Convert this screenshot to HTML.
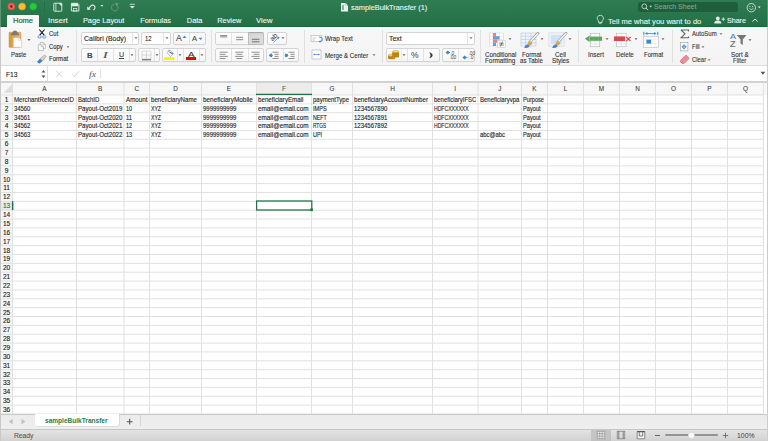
<!DOCTYPE html>
<html><head><meta charset="utf-8"><style>
html,body{margin:0;padding:0;width:768px;height:441px;overflow:hidden;background:#fff;position:relative;font-family:"Liberation Sans",sans-serif}
</style></head><body>
<div style="position:absolute;left:0px;top:0px;width:768px;height:27px;background:linear-gradient(#307d53,#2a774e 45%,#227046 96%,#1b663d 96%)"></div><svg style="position:absolute;left:0px;top:0px;" width="45" height="14" viewBox="0 0 45 14"><circle cx="11.3" cy="6.5" r="3.5" fill="#fc5f57" stroke="#de4a42" stroke-width="0.5"/><circle cx="11.3" cy="6.5" r="1.15" fill="#6a0b07"/><circle cx="22.1" cy="6.5" r="3.5" fill="#fdbb2e" stroke="#dea034" stroke-width="0.5"/><circle cx="33.2" cy="6.5" r="3.5" fill="#28c840" stroke="#1aab29" stroke-width="0.5"/></svg><div style="position:absolute;left:7px;top:15px;width:32px;height:12px;background:#f8f8f8;border-radius:1px 1px 0 0"></div><div style="position:absolute;left:638px;top:1.8px;width:99.8px;height:10px;background:#1f5e3b;border-radius:2.5px"></div><div style="position:absolute;left:0px;top:27px;width:768px;height:39px;background:linear-gradient(#f7f7f7,#f4f4f4);border-bottom:1px solid #dcdcdc;box-sizing:border-box"></div><div style="position:absolute;left:76.4px;top:29.6px;width:1px;height:33.7px;background:#e0e0e0"></div><div style="position:absolute;left:210.7px;top:29.6px;width:1px;height:33.7px;background:#e0e0e0"></div><div style="position:absolute;left:304px;top:29.6px;width:1px;height:33.7px;background:#e0e0e0"></div><div style="position:absolute;left:381.8px;top:29.6px;width:1px;height:33.7px;background:#e0e0e0"></div><div style="position:absolute;left:480px;top:29.6px;width:1px;height:33.7px;background:#e0e0e0"></div><div style="position:absolute;left:578px;top:29.6px;width:1px;height:33.7px;background:#e0e0e0"></div><div style="position:absolute;left:671.5px;top:29.6px;width:1px;height:33.7px;background:#e0e0e0"></div><div style="position:absolute;left:0px;top:66px;width:768px;height:15px;background:#fff"></div><div style="position:absolute;left:0px;top:81px;width:768px;height:2px;background:#d2d2d2"></div><div style="position:absolute;left:46.5px;top:66px;width:1px;height:15px;background:#dedede"></div><div style="position:absolute;left:100px;top:69px;width:0.8px;height:9px;background:#e2e2e2"></div><svg style="position:absolute;left:0px;top:83px;" width="768" height="331" viewBox="0 0 768 331"><rect x="0" y="0" width="768" height="12.0" fill="#f7f7f7"/><rect x="0" y="12.0" width="13" height="319.0" fill="#f7f7f7"/><rect x="256" y="0" width="56" height="12.0" fill="#ececec"/><rect x="0" y="118.32" width="13" height="8.86" fill="#e9e9e9"/><rect x="0" y="11.50" width="764" height="1" fill="#e1e1e1"/><rect x="0" y="20.36" width="764" height="1" fill="#e1e1e1"/><rect x="0" y="29.22" width="764" height="1" fill="#e1e1e1"/><rect x="0" y="38.08" width="764" height="1" fill="#e1e1e1"/><rect x="0" y="46.94" width="764" height="1" fill="#e1e1e1"/><rect x="0" y="55.80" width="764" height="1" fill="#e1e1e1"/><rect x="0" y="64.66" width="764" height="1" fill="#e1e1e1"/><rect x="0" y="73.52" width="764" height="1" fill="#e1e1e1"/><rect x="0" y="82.38" width="764" height="1" fill="#e1e1e1"/><rect x="0" y="91.24" width="764" height="1" fill="#e1e1e1"/><rect x="0" y="100.10" width="764" height="1" fill="#e1e1e1"/><rect x="0" y="108.96" width="764" height="1" fill="#e1e1e1"/><rect x="0" y="117.82" width="764" height="1" fill="#e1e1e1"/><rect x="0" y="126.68" width="764" height="1" fill="#e1e1e1"/><rect x="0" y="135.54" width="764" height="1" fill="#e1e1e1"/><rect x="0" y="144.40" width="764" height="1" fill="#e1e1e1"/><rect x="0" y="153.26" width="764" height="1" fill="#e1e1e1"/><rect x="0" y="162.12" width="764" height="1" fill="#e1e1e1"/><rect x="0" y="170.98" width="764" height="1" fill="#e1e1e1"/><rect x="0" y="179.84" width="764" height="1" fill="#e1e1e1"/><rect x="0" y="188.70" width="764" height="1" fill="#e1e1e1"/><rect x="0" y="197.56" width="764" height="1" fill="#e1e1e1"/><rect x="0" y="206.42" width="764" height="1" fill="#e1e1e1"/><rect x="0" y="215.28" width="764" height="1" fill="#e1e1e1"/><rect x="0" y="224.14" width="764" height="1" fill="#e1e1e1"/><rect x="0" y="233.00" width="764" height="1" fill="#e1e1e1"/><rect x="0" y="241.86" width="764" height="1" fill="#e1e1e1"/><rect x="0" y="250.72" width="764" height="1" fill="#e1e1e1"/><rect x="0" y="259.58" width="764" height="1" fill="#e1e1e1"/><rect x="0" y="268.44" width="764" height="1" fill="#e1e1e1"/><rect x="0" y="277.30" width="764" height="1" fill="#e1e1e1"/><rect x="0" y="286.16" width="764" height="1" fill="#e1e1e1"/><rect x="0" y="295.02" width="764" height="1" fill="#e1e1e1"/><rect x="0" y="303.88" width="764" height="1" fill="#e1e1e1"/><rect x="0" y="312.74" width="764" height="1" fill="#e1e1e1"/><rect x="0" y="321.60" width="764" height="1" fill="#e1e1e1"/><rect x="0" y="330.46" width="764" height="1" fill="#e1e1e1"/><rect x="12" y="0" width="1" height="331" fill="#e1e1e1"/><rect x="76" y="0" width="1" height="331" fill="#e1e1e1"/><rect x="123.5" y="0" width="1" height="331" fill="#e1e1e1"/><rect x="149" y="0" width="1" height="331" fill="#e1e1e1"/><rect x="201" y="0" width="1" height="331" fill="#e1e1e1"/><rect x="256" y="0" width="1" height="331" fill="#e1e1e1"/><rect x="311" y="0" width="1" height="331" fill="#e1e1e1"/><rect x="352" y="0" width="1" height="331" fill="#e1e1e1"/><rect x="432" y="0" width="1" height="331" fill="#e1e1e1"/><rect x="477.5" y="0" width="1" height="331" fill="#e1e1e1"/><rect x="521" y="0" width="1" height="331" fill="#e1e1e1"/><rect x="547" y="0" width="1" height="331" fill="#e1e1e1"/><rect x="583" y="0" width="1" height="331" fill="#e1e1e1"/><rect x="619" y="0" width="1" height="331" fill="#e1e1e1"/><rect x="655" y="0" width="1" height="331" fill="#e1e1e1"/><rect x="691" y="0" width="1" height="331" fill="#e1e1e1"/><rect x="727" y="0" width="1" height="331" fill="#e1e1e1"/><rect x="763" y="0" width="1" height="331" fill="#e1e1e1"/><rect x="256.6" y="118.0" width="55.2" height="9.0" fill="none" stroke="#217346" stroke-width="1.25"/><rect x="310.2" y="125.5" width="2.7" height="2.6" fill="#217346"/><rect x="256" y="10.75" width="56" height="1.3" fill="#217346"/><rect x="11.9" y="118.2" width="1.5" height="8.9" fill="#217346"/><path d="M3.6 9.7 L12.3 1 L12.3 9.7 Z" fill="#dddddd"/></svg><div style="position:absolute;left:0px;top:414px;width:768px;height:15px;background:linear-gradient(#ebebeb,#efefef);border-top:1px solid #c9c9c9;box-sizing:border-box"></div><div style="position:absolute;left:34.8px;top:413.5px;width:84px;height:12.9px;background:#fff;border-radius:0 0 2px 2px;box-shadow:0.5px 0.5px 0.5px rgba(0,0,0,.15)"></div><div style="position:absolute;left:140px;top:415px;width:0.8px;height:11px;background:#d5d5d5"></div><div style="position:absolute;left:0px;top:428.6px;width:768px;height:12.4px;background:linear-gradient(#e3e3e3,#d9d9d9 60%,#d1d1d1);border-top:1px solid #c6c6c6;box-sizing:border-box"></div><div style="position:absolute;left:591px;top:429.5px;width:20.3px;height:11.5px;background:linear-gradient(#c6c6c6,#c1c1c1)"></div><svg style="position:absolute;left:8px;top:29px;" width="22" height="20" viewBox="0 0 22 20"><defs><linearGradient id="cb" x1="0" x2="1"><stop offset="0" stop-color="#d99a3e"/><stop offset="1" stop-color="#eab766"/></linearGradient></defs><rect x="1" y="3.2" width="12" height="15.2" rx="0.8" fill="url(#cb)" stroke="#c48a3a" stroke-width="0.4"/><path d="M3 6.2 Q3 3.6 4.6 3.2 Q5.2 1.6 7 1.6 Q8.8 1.6 9.4 3.2 Q11 3.6 11 6.2 Z" fill="#7b7b7b"/><path d="M5.4 8.7 H10.8 L13.6 11.5 V18.3 H5.4 Z" fill="#fff" stroke="#c4c4c4" stroke-width="0.5"/><path d="M10.8 8.7 V11.5 H13.6" fill="none" stroke="#c4c4c4" stroke-width="0.5"/></svg><svg style="position:absolute;left:25.5px;top:36.5px;" width="6" height="6" viewBox="0 0 6 6"><path d="M1.375 2.10625 L4.625 2.10625 L3 4.05625 Z" fill="#666"/></svg><svg style="position:absolute;left:36px;top:28px;" width="12" height="12" viewBox="0 0 12 12"><path d="M3.3 1.5 L8.2 7.2 M8.6 1.5 L3.7 7.2" stroke="#111" stroke-width="1.1"/><ellipse cx="3.6" cy="8.9" rx="1.7" ry="1.25" fill="none" stroke="#3d8be0" stroke-width="0.8"/><ellipse cx="8.3" cy="8.9" rx="1.7" ry="1.25" fill="none" stroke="#3d8be0" stroke-width="0.8"/></svg><svg style="position:absolute;left:37px;top:41px;" width="10" height="11" viewBox="0 0 10 11"><path d="M3.2 1.4 H6.2 L8.3 3.5 V7.6 H3.2 Z" fill="#fbfbfb" stroke="#9a9a9a" stroke-width="0.55"/><path d="M6.2 1.4 V3.5 H8.3" fill="none" stroke="#9a9a9a" stroke-width="0.5"/><path d="M1.3 3.6 H4.3 L6.4 5.7 V9.6 H1.3 Z" fill="#fbfbfb" stroke="#9a9a9a" stroke-width="0.55"/><path d="M4.3 3.6 V5.7 H6.4" fill="none" stroke="#9a9a9a" stroke-width="0.5"/></svg><svg style="position:absolute;left:65px;top:43.6px;" width="6" height="6" viewBox="0 0 6 6"><path d="M1.625 2.24375 L4.375 2.24375 L3 3.89375 Z" fill="#777"/></svg><svg style="position:absolute;left:36px;top:54px;" width="11" height="10" viewBox="0 0 11 10"><path d="M1.2 7.6 L4.2 4.6 L6.6 7 L3.6 9.6 Q1.8 9.4 1.2 7.6 Z" fill="#3b7fd4"/><path d="M4.2 4.6 L8.6 0.8 L10.2 2.4 L6.6 7 Z" fill="#cfc6b6" stroke="#8f8472" stroke-width="0.4"/><path d="M5 5.4 L9 1.6" stroke="#fff" stroke-width="0.5"/></svg><div style="position:absolute;left:81px;top:32px;width:58px;height:13px;background:#fff;border:1px solid #d4d4d4;border-radius:2px;box-sizing:border-box"></div><div style="position:absolute;left:132.3px;top:32.6px;width:0.8px;height:10.6px;background:#e4e4e4"></div><svg style="position:absolute;left:132.6px;top:35.2px;" width="6" height="6" viewBox="0 0 6 6"><path d="M1.5 2.175 L4.5 2.175 L3 3.975 Z" fill="#666"/></svg><div style="position:absolute;left:141px;top:32px;width:30px;height:13px;background:#fff;border:1px solid #d4d4d4;border-radius:2px;box-sizing:border-box"></div><div style="position:absolute;left:163px;top:32.6px;width:0.8px;height:10.6px;background:#e4e4e4"></div><svg style="position:absolute;left:163.7px;top:35.2px;" width="6" height="6" viewBox="0 0 6 6"><path d="M1.5 2.175 L4.5 2.175 L3 3.975 Z" fill="#666"/></svg><div style="position:absolute;left:173px;top:32px;width:33px;height:13px;background:linear-gradient(#fefefe,#f5f5f5);border:1px solid #d4d4d4;border-radius:2px;box-sizing:border-box;box-shadow:0 0.5px 0.5px rgba(0,0,0,.04)"></div><div style="position:absolute;left:189.3px;top:33px;width:0.8px;height:11px;background:#e2e2e2"></div><svg style="position:absolute;left:182px;top:35px;" width="5" height="4" viewBox="0 0 5 4"><path d="M0.5 3 L2.5 0.8 L4.5 3 Z" fill="#3a86d8"/></svg><svg style="position:absolute;left:197.8px;top:36.5px;" width="5" height="4" viewBox="0 0 5 4"><path d="M0.5 0.8 L2.5 3 L4.5 0.8 Z" fill="#3a86d8"/></svg><div style="position:absolute;left:81px;top:48px;width:55px;height:14px;background:linear-gradient(#fefefe,#f5f5f5);border:1px solid #d4d4d4;border-radius:2px;box-sizing:border-box;box-shadow:0 0.5px 0.5px rgba(0,0,0,.04)"></div><div style="position:absolute;left:97.3px;top:49px;width:0.8px;height:12px;background:#e2e2e2"></div><div style="position:absolute;left:113.4px;top:49px;width:0.8px;height:12px;background:#e2e2e2"></div><div style="position:absolute;left:129px;top:49px;width:0.8px;height:12px;background:#e2e2e2"></div><div style="position:absolute;left:118.8px;top:58.2px;width:5.3px;height:0.8px;background:#444"></div><svg style="position:absolute;left:129.4px;top:52px;" width="6" height="6" viewBox="0 0 6 6"><path d="M1.5 2.175 L4.5 2.175 L3 3.975 Z" fill="#666"/></svg><div style="position:absolute;left:138px;top:48px;width:22px;height:14px;background:linear-gradient(#fefefe,#f5f5f5);border:1px solid #d4d4d4;border-radius:2px;box-sizing:border-box;box-shadow:0 0.5px 0.5px rgba(0,0,0,.04)"></div><div style="position:absolute;left:153.5px;top:49px;width:0.8px;height:12px;background:#e2e2e2"></div><svg style="position:absolute;left:141px;top:49.5px;" width="11" height="11" viewBox="0 0 11 11"><path d="M1 1 H10 V9 H1 Z M5.5 1 V9 M1 5 H10" fill="none" stroke="#c4c4c4" stroke-width="0.6"/><path d="M1 9.8 H10" stroke="#444" stroke-width="0.9"/></svg><svg style="position:absolute;left:153.5px;top:52px;" width="6" height="6" viewBox="0 0 6 6"><path d="M1.5 2.175 L4.5 2.175 L3 3.975 Z" fill="#666"/></svg><div style="position:absolute;left:162px;top:48px;width:44px;height:14px;background:linear-gradient(#fefefe,#f5f5f5);border:1px solid #d4d4d4;border-radius:2px;box-sizing:border-box;box-shadow:0 0.5px 0.5px rgba(0,0,0,.04)"></div><div style="position:absolute;left:176.5px;top:49px;width:0.8px;height:12px;background:#e2e2e2"></div><div style="position:absolute;left:183.2px;top:49px;width:0.8px;height:12px;background:#e2e2e2"></div><div style="position:absolute;left:199.1px;top:49px;width:0.8px;height:12px;background:#e2e2e2"></div><svg style="position:absolute;left:164px;top:49px;" width="11" height="11" viewBox="0 0 11 11"><path d="M3 3.5 L6 1 L9.5 4.5 L6.5 7.5 Z" fill="#fff" stroke="#888" stroke-width="0.6"/><path d="M5.5 3 L8.8 5" stroke="#3a86d8" stroke-width="1.3"/><path d="M5 0.5 V3" stroke="#666" stroke-width="0.5"/><rect x="0" y="8.2" width="10.5" height="2.6" fill="#f4f400"/></svg><svg style="position:absolute;left:177px;top:52px;" width="6" height="6" viewBox="0 0 6 6"><path d="M1.5 2.175 L4.5 2.175 L3 3.975 Z" fill="#666"/></svg><div style="position:absolute;left:186px;top:57.2px;width:10.4px;height:2.5px;background:#ee0000"></div><svg style="position:absolute;left:199.2px;top:52px;" width="6" height="6" viewBox="0 0 6 6"><path d="M1.5 2.175 L4.5 2.175 L3 3.975 Z" fill="#666"/></svg><div style="position:absolute;left:215px;top:32px;width:49px;height:13px;background:linear-gradient(#fefefe,#f5f5f5);border:1px solid #d4d4d4;border-radius:2px;box-sizing:border-box;box-shadow:0 0.5px 0.5px rgba(0,0,0,.04)"></div><div style="position:absolute;left:248px;top:32px;width:16px;height:13px;background:linear-gradient(#cfcfcf,#dadada 20%,#dcdcdc);border:1px solid #bdbdbd;border-top-color:#a8a8a8;box-sizing:border-box;border-radius:0 2px 2px 0"></div><div style="position:absolute;left:231.3px;top:33px;width:0.8px;height:11px;background:#e2e2e2"></div><svg style="position:absolute;left:215px;top:31px;" width="49" height="14" viewBox="0 0 49 14"><path d="M5.2 4.6 H12.2 M5.2 5.9 H12.2" stroke="#777" stroke-width="0.9"/><path d="M21.2 6.3 H28.1 M21.2 8.7 H28.1" stroke="#777" stroke-width="0.9"/><path d="M36.9 8.3 H44.5 M36.9 10.8 H44.5" stroke="#666" stroke-width="0.9"/></svg><div style="position:absolute;left:267px;top:32px;width:20px;height:13px;background:linear-gradient(#fefefe,#f5f5f5);border:1px solid #d4d4d4;border-radius:2px;box-sizing:border-box;box-shadow:0 0.5px 0.5px rgba(0,0,0,.04)"></div><svg style="position:absolute;left:267px;top:32px;" width="15" height="13" viewBox="0 0 15 13"><g transform="rotate(-45 6.5 5)"><text x="6.5" y="7.4" text-anchor="middle" font-family="Liberation Sans" font-size="7" fill="#333" style="-webkit-text-stroke:0.15px #333">ab</text></g><path d="M6.3 10.6 L11.3 5.8" stroke="#3a86d8" stroke-width="0.7"/><circle cx="11.4" cy="5.7" r="1" fill="#3a86d8"/></svg><svg style="position:absolute;left:280px;top:35px;" width="6" height="6" viewBox="0 0 6 6"><path d="M1.5 2.175 L4.5 2.175 L3 3.975 Z" fill="#666"/></svg><div style="position:absolute;left:215px;top:48px;width:49px;height:14px;background:linear-gradient(#fefefe,#f5f5f5);border:1px solid #d4d4d4;border-radius:2px;box-sizing:border-box;box-shadow:0 0.5px 0.5px rgba(0,0,0,.04)"></div><div style="position:absolute;left:231.3px;top:49px;width:0.8px;height:12px;background:#e2e2e2"></div><div style="position:absolute;left:247.8px;top:49px;width:0.8px;height:12px;background:#e2e2e2"></div><svg style="position:absolute;left:215px;top:48px;" width="49" height="14" viewBox="0 0 49 14"><path d="M4.6 4.2 H12.8 M4.6 6.3 H10.5 M4.6 8.4 H12.8 M4.6 10.5 H10.5" stroke="#777" stroke-width="0.8"/><path d="M20.2 4.2 H28.4 M21.3 6.3 H27.3 M20.2 8.4 H28.4 M21.3 10.5 H27.3" stroke="#777" stroke-width="0.8"/><path d="M36.4 4.2 H44.6 M38.6 6.3 H44.6 M36.4 8.4 H44.6 M38.6 10.5 H44.6" stroke="#777" stroke-width="0.8"/></svg><div style="position:absolute;left:266px;top:48px;width:33px;height:14px;background:linear-gradient(#fefefe,#f5f5f5);border:1px solid #d4d4d4;border-radius:2px;box-sizing:border-box;box-shadow:0 0.5px 0.5px rgba(0,0,0,.04)"></div><div style="position:absolute;left:282.6px;top:49px;width:0.8px;height:12px;background:#e2e2e2"></div><svg style="position:absolute;left:266px;top:48px;" width="33" height="14" viewBox="0 0 33 14"><path d="M6.5 4.2 H12.6 M8.5 6.3 H12.6 M8.5 8.4 H12.6 M6.5 10.5 H12.6" stroke="#777" stroke-width="0.8"/><path d="M3 7.3 L6 5.2 V9.4 Z" fill="#3a86d8"/><circle cx="5" cy="7.3" r="1.6" fill="#3a86d8"/><path d="M22.5 4.2 H28.6 M24.5 6.3 H28.6 M24.5 8.4 H28.6 M22.5 10.5 H28.6" stroke="#777" stroke-width="0.8"/><path d="M19 5.2 L22 7.3 L19 9.4 Z" fill="#3a86d8"/><circle cx="20.5" cy="7.3" r="1.6" fill="#3a86d8"/></svg><svg style="position:absolute;left:310px;top:34px;" width="14" height="9" viewBox="0 0 14 9"><rect x="1" y="1.5" width="10.5" height="6" fill="#fff" stroke="#aaa" stroke-width="0.6"/><path d="M2.5 4 H6 M2.5 6 H5" stroke="#aaa" stroke-width="0.6"/><path d="M9 3 Q12.5 3 12.5 5.5 Q12.5 7.6 9.8 7.6" fill="none" stroke="#3a86d8" stroke-width="0.9"/><path d="M10.4 6.3 L8.6 7.6 L10.4 8.9 Z" fill="#3a86d8"/></svg><svg style="position:absolute;left:311px;top:49px;" width="11" height="11" viewBox="0 0 11 11"><rect x="1" y="1" width="9" height="9" fill="#fff" stroke="#aaa" stroke-width="0.6"/><path d="M2.5 5.5 H8.5" stroke="#3a86d8" stroke-width="0.7"/><path d="M2.2 5.5 L3.6 4.4 V6.6 Z M8.8 5.5 L7.4 4.4 V6.6 Z" fill="#3a86d8"/></svg><svg style="position:absolute;left:370.5px;top:52px;" width="6" height="6" viewBox="0 0 6 6"><path d="M1.5 2.175 L4.5 2.175 L3 3.975 Z" fill="#777"/></svg><div style="position:absolute;left:386px;top:32px;width:89px;height:13px;background:#fff;border:1px solid #d4d4d4;border-radius:2px;box-sizing:border-box"></div><div style="position:absolute;left:466.8px;top:32.5px;width:0.8px;height:11px;background:#e4e4e4"></div><svg style="position:absolute;left:467.6px;top:35.3px;" width="6" height="6" viewBox="0 0 6 6"><path d="M1.5 2.175 L4.5 2.175 L3 3.975 Z" fill="#666"/></svg><div style="position:absolute;left:386px;top:48px;width:54px;height:14px;background:linear-gradient(#fefefe,#f5f5f5);border:1px solid #d4d4d4;border-radius:2px;box-sizing:border-box;box-shadow:0 0.5px 0.5px rgba(0,0,0,.04)"></div><div style="position:absolute;left:407.4px;top:49px;width:0.8px;height:12px;background:#e2e2e2"></div><div style="position:absolute;left:423.4px;top:49px;width:0.8px;height:12px;background:#e2e2e2"></div><div style="position:absolute;left:400.9px;top:49.5px;width:0.6px;height:11px;background:#ececec"></div><svg style="position:absolute;left:387px;top:49px;" width="14" height="12" viewBox="0 0 14 12"><rect x="1" y="6.2" width="7.2" height="4" rx="1.2" fill="#c8961c"/><path d="M1.2 7.6 H8 M1.2 9 H8" stroke="#8f6608" stroke-width="0.5"/><ellipse cx="4.6" cy="6.2" rx="3.6" ry="1.2" fill="#f5d469" stroke="#a87a10" stroke-width="0.3"/><rect x="5.2" y="2.6" width="6.8" height="6" rx="1.2" fill="#c8961c"/><path d="M5.4 4.2 H11.8 M5.4 5.7 H11.8 M5.4 7.2 H11.8" stroke="#8f6608" stroke-width="0.5"/><ellipse cx="8.6" cy="2.6" rx="3.4" ry="1.2" fill="#f5d469" stroke="#a87a10" stroke-width="0.3"/></svg><svg style="position:absolute;left:401px;top:52px;" width="6" height="6" viewBox="0 0 6 6"><path d="M1.5 2.175 L4.5 2.175 L3 3.975 Z" fill="#666"/></svg><svg style="position:absolute;left:427px;top:50px;" width="8" height="10" viewBox="0 0 8 10"><path d="M2 2.2 Q5.6 3.2 5.6 5.2 Q5.6 7.4 2.2 8 Q3.6 6.6 3.6 5.2 Q3.6 3.8 2 2.2 Z" fill="#333"/></svg><div style="position:absolute;left:442px;top:48px;width:33px;height:14px;background:linear-gradient(#fefefe,#f5f5f5);border:1px solid #d4d4d4;border-radius:2px;box-sizing:border-box;box-shadow:0 0.5px 0.5px rgba(0,0,0,.04)"></div><div style="position:absolute;left:458.4px;top:49px;width:0.8px;height:12px;background:#e2e2e2"></div><svg style="position:absolute;left:443px;top:49px;" width="34" height="12" viewBox="0 0 34 12"><path d="M2.6 3.4 L4.8 1.4 L7 3.4 L4.8 5.4 Z" fill="#3a86d8"/><path d="M4.8 3.4 H7" stroke="#3a86d8" stroke-width="0.9"/><text x="7.2" y="5.8" font-family="Liberation Sans" font-size="4.9" fill="#444">.0</text><text x="6.4" y="10.4" font-family="Liberation Sans" font-size="4.9" fill="#444">.00</text><text x="25.4" y="5.8" font-family="Liberation Sans" font-size="4.9" fill="#444">.00</text><text x="26.4" y="10.4" font-family="Liberation Sans" font-size="4.9" fill="#444">.0</text><path d="M19.4 8.4 L21.6 6.4 L23.8 8.4 L21.6 10.4 Z" fill="#3a86d8"/><path d="M21.6 8.4 H25.4" stroke="#3a86d8" stroke-width="0.7" stroke-dasharray="0.8 0.6"/></svg><svg style="position:absolute;left:488px;top:32px;" width="20" height="17" viewBox="0 0 20 17"><rect x="1.5" y="1" width="14" height="13" fill="#fff" stroke="#ccc" stroke-width="0.5"/><path d="M1.5 4.2 H15.5 M1.5 7.5 H15.5 M1.5 10.8 H15.5 M5 1 V14 M11.5 1 V14" stroke="#d5d5d5" stroke-width="0.5"/><rect x="5" y="1" width="3" height="3.2" fill="#f08080"/><rect x="5" y="4.2" width="6.5" height="3.3" fill="#5aa0e8"/><rect x="5" y="7.5" width="4" height="3.3" fill="#f08080"/><rect x="5" y="10.8" width="3" height="3.2" fill="#5aa0e8"/><rect x="9.5" y="8.5" width="8" height="7" fill="#fff" stroke="#bbb" stroke-width="0.5"/><path d="M11.3 11.2 H15.7 M11.3 13 H15.7 M12.6 14.6 L14.4 9.6" stroke="#333" stroke-width="0.6"/></svg><svg style="position:absolute;left:507px;top:36px;" width="6" height="6" viewBox="0 0 6 6"><path d="M1.5 2.175 L4.5 2.175 L3 3.975 Z" fill="#666"/></svg><svg style="position:absolute;left:520px;top:32px;" width="20" height="17" viewBox="0 0 20 17"><rect x="1" y="1" width="15" height="13" fill="#eef5fc" stroke="#bbb" stroke-width="0.5"/><path d="M1 4.2 H16 M1 7.5 H16 M1 10.8 H16 M5.5 1 V14 M11 1 V14" stroke="#9cc3ea" stroke-width="0.5"/><path d="M18 1.2 L10 10" stroke="#8a8a8a" stroke-width="2.6" stroke-linecap="round"/><path d="M18 1.2 L10 10" stroke="#fafafa" stroke-width="1.5" stroke-linecap="round"/><path d="M9.2 8.2 L12.4 11.2 Q10.4 14.6 6.4 14.2 Z" fill="#e5a04a"/><path d="M4.2 16 Q5.2 12.4 8.2 12.6 L9.6 14.4 Q7.6 16.4 4.2 16 Z" fill="#3b86e0"/></svg><svg style="position:absolute;left:539px;top:36px;" width="6" height="6" viewBox="0 0 6 6"><path d="M1.5 2.175 L4.5 2.175 L3 3.975 Z" fill="#666"/></svg><svg style="position:absolute;left:548px;top:32px;" width="20" height="17" viewBox="0 0 20 17"><rect x="1" y="1" width="15" height="13" fill="#fff" stroke="#bbb" stroke-width="0.5"/><rect x="2.5" y="2.5" width="12" height="10" fill="#cfe3f7"/><path d="M18 1.2 L10 10" stroke="#8a8a8a" stroke-width="2.6" stroke-linecap="round"/><path d="M18 1.2 L10 10" stroke="#fafafa" stroke-width="1.5" stroke-linecap="round"/><path d="M9.2 8.2 L12.4 11.2 Q10.4 14.6 6.4 14.2 Z" fill="#e5a04a"/><path d="M4.2 16 Q5.2 12.4 8.2 12.6 L9.6 14.4 Q7.6 16.4 4.2 16 Z" fill="#3b86e0"/></svg><svg style="position:absolute;left:567px;top:36px;" width="6" height="6" viewBox="0 0 6 6"><path d="M1.5 2.175 L4.5 2.175 L3 3.975 Z" fill="#666"/></svg><svg style="position:absolute;left:583px;top:32px;" width="20" height="16" viewBox="0 0 20 16"><rect x="7.2" y="1.2" width="9.6" height="13.6" fill="#fff" stroke="#a0a0a0" stroke-width="0.5"/><path d="M7.2 9.4 H16.8 M7.2 12 H16.8 M12 1.2 V14.8" stroke="#d0d0d0" stroke-width="0.5"/><rect x="7" y="4.6" width="12" height="4.2" fill="#5aa85a"/><path d="M11 4.6 V8.8 M15 4.6 V8.8" stroke="#8cc68c" stroke-width="0.4"/><path d="M1.8 6.7 L6.6 3.4 V10 Z" fill="#5aa85a"/></svg><svg style="position:absolute;left:603.7px;top:36px;" width="6" height="6" viewBox="0 0 6 6"><path d="M1.5 2.175 L4.5 2.175 L3 3.975 Z" fill="#666"/></svg><svg style="position:absolute;left:612px;top:32px;" width="22" height="16" viewBox="0 0 22 16"><rect x="4.5" y="1.2" width="9.6" height="13.6" fill="#fff" stroke="#aaa" stroke-width="0.5"/><path d="M4.5 5.2 H14.1 M4.5 9 H14.1 M4.5 12 H14.1 M9.3 1.2 V14.8" stroke="#ccc" stroke-width="0.5"/><rect x="2" y="4.4" width="11" height="4.6" fill="#d64b4b"/><path d="M14.3 5 L18.5 9 M18.5 5 L14.3 9" stroke="#d64b4b" stroke-width="1.1"/></svg><svg style="position:absolute;left:632.7px;top:36px;" width="6" height="6" viewBox="0 0 6 6"><path d="M1.5 2.175 L4.5 2.175 L3 3.975 Z" fill="#666"/></svg><svg style="position:absolute;left:642px;top:31px;" width="18" height="18" viewBox="0 0 18 18"><path d="M1.8 0.8 V4.2 M15.8 0.8 V4.2" stroke="#3a86d8" stroke-width="1"/><path d="M3.5 2.5 H14" stroke="#3a86d8" stroke-width="0.8"/><path d="M3 2.5 L5.4 1 V4 Z M14.6 2.5 L12.2 1 V4 Z" fill="#3a86d8"/><rect x="1.5" y="5.2" width="15" height="11.3" fill="#fff" stroke="#a8a8a8" stroke-width="0.5"/><path d="M1.5 8.7 H16.5 M1.5 12.6 H16.5 M9.3 5.2 V16.5 M12.9 5.2 V16.5" stroke="#dedede" stroke-width="0.5"/><rect x="4.4" y="8.7" width="4.6" height="3.9" fill="#3a86d8"/></svg><svg style="position:absolute;left:660px;top:36px;" width="6" height="6" viewBox="0 0 6 6"><path d="M1.5 2.175 L4.5 2.175 L3 3.975 Z" fill="#666"/></svg><svg style="position:absolute;left:680px;top:29px;" width="10" height="10" viewBox="0 0 10 10"><path d="M1 1 H8.5 V2.4 M1 1 L5 4.8 L1 8.8 H8.5 V7.4" fill="none" stroke="#666" stroke-width="1.1"/></svg><svg style="position:absolute;left:718px;top:31px;" width="6" height="6" viewBox="0 0 6 6"><path d="M1.5 2.175 L4.5 2.175 L3 3.975 Z" fill="#777"/></svg><svg style="position:absolute;left:679px;top:41px;" width="10" height="11" viewBox="0 0 10 11"><rect x="1.3" y="1.3" width="7.6" height="8.6" fill="#fff" stroke="#9a9a9a" stroke-width="0.6"/><path d="M5.1 3.2 L7.6 5.8 L5.1 8.4 L2.6 5.8 Z" fill="#3a86d8"/><path d="M5.1 4.4 V6.6 M4.2 5.8 L5.1 6.8 L6 5.8" fill="none" stroke="#fff" stroke-width="0.5"/></svg><svg style="position:absolute;left:699.5px;top:43.8px;" width="6" height="6" viewBox="0 0 6 6"><path d="M1.5 2.175 L4.5 2.175 L3 3.975 Z" fill="#777"/></svg><svg style="position:absolute;left:679px;top:54px;" width="11" height="10" viewBox="0 0 11 10"><path d="M1.6 6.2 L6.2 1.6 Q7 0.9 7.8 1.6 L9.6 3.4 Q10.3 4.2 9.6 5 L5 9.6 Q4.2 10.3 3.4 9.6 L1.6 7.8 Q0.9 7 1.6 6.2 Z" fill="#ea8c98" stroke="#c9636f" stroke-width="0.5"/><path d="M1.6 7.8 L3.4 9.6" stroke="#b94d5a" stroke-width="0.8"/></svg><svg style="position:absolute;left:706.4px;top:56.6px;" width="6" height="6" viewBox="0 0 6 6"><path d="M1.5 2.175 L4.5 2.175 L3 3.975 Z" fill="#777"/></svg><svg style="position:absolute;left:736px;top:34px;" width="12" height="12" viewBox="0 0 12 12"><path d="M0.8 1 H10.5 L6.8 5.5 V11 L4.5 9.6 V5.5 Z" fill="#777"/></svg><svg style="position:absolute;left:746.8px;top:37px;" width="6" height="6" viewBox="0 0 6 6"><path d="M1.5 2.175 L4.5 2.175 L3 3.975 Z" fill="#666"/></svg><svg style="position:absolute;left:52px;top:2px;" width="11" height="10" viewBox="0 0 11 10"><rect x="1.8" y="1.2" width="8" height="8" rx="0.5" fill="none" stroke="#e3eee7" stroke-width="0.9"/><path d="M3.9 1.2 V9.2" stroke="#e3eee7" stroke-width="0.8"/><path d="M6.6 1.2 H9.8 V4.4 Z" fill="#e3eee7"/></svg><svg style="position:absolute;left:70px;top:2px;" width="10" height="10" viewBox="0 0 10 10"><path d="M1.4 1.3 H7.6 L8.9 2.6 V9 H1.4 Z" fill="none" stroke="#e3eee7" stroke-width="0.9"/><rect x="1.4" y="1.3" width="6.6" height="3" fill="#e3eee7"/><rect x="3.4" y="6.6" width="3.4" height="2.4" fill="none" stroke="#e3eee7" stroke-width="0.7"/></svg><svg style="position:absolute;left:86px;top:2px;" width="12" height="9" viewBox="0 0 12 9"><path d="M2.6 6.6 L4.6 4.2 Q6.4 2.4 8.2 3.6 Q9.8 5 8.4 7.2 L7.4 8.2" fill="none" stroke="#e3eee7" stroke-width="1.05"/><path d="M1.2 4.4 L1.3 8 L4.8 7.6 Z" fill="#e3eee7"/></svg><div style="position:absolute;left:44px;top:2px;width:0.8px;height:10px;background:#246f48"></div><svg style="position:absolute;left:100px;top:4px;" width="4" height="4" viewBox="0 0 4 4"><path d="M0.4 1 H3.4 L1.9 2.8 Z" fill="#e3eee7"/></svg><svg style="position:absolute;left:110px;top:2px;" width="10" height="10" viewBox="0 0 10 10"><path d="M4.2 2.2 A3.4 3.4 0 1 0 7.6 3.6" fill="none" stroke="#6a9c7e" stroke-width="0.9"/><path d="M5.2 0.4 L8.6 1.6 L6.4 4.4 Z" fill="#6a9c7e"/></svg><svg style="position:absolute;left:129px;top:3px;" width="7" height="7" viewBox="0 0 7 7"><path d="M0.8 1.3 H5.8" stroke="#e3eee7" stroke-width="0.8"/><path d="M0.8 3 H5.8 L3.3 5.6 Z" fill="#e3eee7"/></svg><svg style="position:absolute;left:340px;top:2px;" width="9" height="10" viewBox="0 0 9 10"><path d="M1 1 H5.6 L8 3.4 V9.6 H1 Z" fill="#eaf2ec"/><path d="M2 3 H4 V8 H2 Z" fill="#8bb39b"/><path d="M5.6 1 V3.4 H8" fill="none" stroke="#8bb39b" stroke-width="0.5"/></svg><svg style="position:absolute;left:640px;top:2px;" width="14" height="10" viewBox="0 0 14 10"><circle cx="4.3" cy="4.3" r="2.4" fill="none" stroke="#c9dccf" stroke-width="0.9"/><path d="M6 6 L8 8.2" stroke="#c9dccf" stroke-width="1"/><path d="M9.3 3.8 H12.1 L10.7 5.4 Z" fill="#c9dccf"/></svg><svg style="position:absolute;left:745px;top:1px;" width="18" height="12" viewBox="0 0 18 12"><circle cx="6.3" cy="6.7" r="4.2" fill="none" stroke="#e3eee7" stroke-width="0.8"/><circle cx="4.9" cy="5.6" r="0.55" fill="#e3eee7"/><circle cx="7.7" cy="5.6" r="0.55" fill="#e3eee7"/><path d="M4.3 7.6 Q6.3 9.6 8.3 7.6" fill="none" stroke="#e3eee7" stroke-width="0.7"/><path d="M12.8 5.6 H15.6 L14.2 7.2 Z" fill="#e3eee7"/></svg><svg style="position:absolute;left:596px;top:14px;" width="9" height="12" viewBox="0 0 9 12"><path d="M4.3 1.3 A3 3 0 0 0 2.5 6.8 V8.4 H6.1 V6.8 A3 3 0 0 0 4.3 1.3 Z" fill="none" stroke="#e3eee7" stroke-width="0.8"/><path d="M2.9 9.6 H5.7" stroke="#e3eee7" stroke-width="0.7"/></svg><svg style="position:absolute;left:713px;top:15px;" width="13" height="10" viewBox="0 0 13 10"><circle cx="4.8" cy="3.5" r="1.9" fill="#e3eee7"/><path d="M1.2 8.6 Q1.2 5.6 4.8 5.6 Q8.4 5.6 8.4 8.6 Z" fill="#e3eee7"/><path d="M8.6 4.2 H12 M10.3 2.5 V5.9" stroke="#e3eee7" stroke-width="0.9"/></svg><svg style="position:absolute;left:751px;top:17px;" width="8" height="6" viewBox="0 0 8 6"><path d="M1.3 4.6 L4 2 L6.7 4.6" fill="none" stroke="#e3eee7" stroke-width="1"/></svg><svg style="position:absolute;left:41px;top:69px;" width="5" height="11" viewBox="0 0 5 11"><path d="M0.6 3.4 L2.5 0.9 L4.4 3.4 Z M0.6 6.6 L2.5 9.1 L4.4 6.6 Z" fill="#555"/></svg><svg style="position:absolute;left:55px;top:70px;" width="9" height="8" viewBox="0 0 9 8"><path d="M1.2 1 L7.4 7 M7.4 1 L1.2 7" stroke="#bdbdbd" stroke-width="0.7"/></svg><svg style="position:absolute;left:71px;top:70px;" width="9" height="8" viewBox="0 0 9 8"><path d="M1 4.2 L3.5 6.8 L8 1.2" fill="none" stroke="#bdbdbd" stroke-width="0.7"/></svg><svg style="position:absolute;left:760px;top:71px;" width="6" height="5" viewBox="0 0 6 5"><path d="M0.5 0.8 H5.3 L2.9 3.8 Z" fill="#555"/></svg><svg style="position:absolute;left:0px;top:414px;" width="34" height="14" viewBox="0 0 34 14"><path d="M12.7 4.7 L8.8 7.6 L12.7 10.5 Z" fill="#c2c2c2"/><path d="M21.5 4.7 L25.4 7.6 L21.5 10.5 Z" fill="#c2c2c2"/></svg><svg style="position:absolute;left:126px;top:418px;" width="8" height="8" viewBox="0 0 8 8"><path d="M0.8 3.7 H6.6 M3.7 0.8 V6.6" stroke="#555" stroke-width="1.1"/></svg><svg style="position:absolute;left:596px;top:430px;" width="10" height="10" viewBox="0 0 10 10"><rect x="1.2" y="1.2" width="7.6" height="7.6" fill="#ececec" stroke="#8a8a8a" stroke-width="0.6"/><path d="M1.2 3.7 H8.8 M1.2 6.2 H8.8 M3.7 1.2 V8.8 M6.2 1.2 V8.8" stroke="#8a8a8a" stroke-width="0.6"/></svg><svg style="position:absolute;left:616px;top:430px;" width="10" height="10" viewBox="0 0 10 10"><rect x="1.2" y="1.2" width="7.6" height="7.6" fill="none" stroke="#777" stroke-width="0.7"/><path d="M2.8 1.2 V8.8 M7.2 1.2 V8.8" stroke="#777" stroke-width="0.9"/></svg><svg style="position:absolute;left:636px;top:430px;" width="10" height="10" viewBox="0 0 10 10"><path d="M1.2 1.6 H8.8 V8.8 H1.2 Z" fill="#f0f0f0" stroke="#666" stroke-width="0.7"/><path d="M1.2 1.6 H8.8" stroke="#555" stroke-width="1.2"/><path d="M3.3 1.6 V6 H6.7 V1.6" fill="none" stroke="#666" stroke-width="0.8"/></svg><div style="position:absolute;left:655.4px;top:434.6px;width:4.2px;height:0.9px;background:#666"></div><div style="position:absolute;left:664.5px;top:434px;width:53.8px;height:2.1px;background:#939393;border-radius:1px"></div><svg style="position:absolute;left:687px;top:431px;" width="9" height="9" viewBox="0 0 9 9"><circle cx="4.4" cy="4.4" r="3.2" fill="#fafafa" stroke="#bdbdbd" stroke-width="0.4"/></svg><svg style="position:absolute;left:721.5px;top:431.5px;" width="8" height="8" viewBox="0 0 8 8"><path d="M0.8 3.5 H6.2 M3.5 0.8 V6.2" stroke="#666" stroke-width="0.9"/></svg><div style="position:absolute;left:0px;top:27px;width:1px;height:414px;background:#c9c9c9"></div><div style="position:absolute;left:767px;top:27px;width:1px;height:414px;background:#cdcdcd"></div><div style="position:absolute;left:767px;top:95px;width:1px;height:319px;background:#d9c6cc"></div><div style="position:absolute;left:0px;top:0px;width:1px;height:27px;background:#5d9474"></div><div style="position:absolute;left:767px;top:0px;width:1px;height:27px;background:#5d9474"></div>
<span style="position:absolute;top:16.00px;font-family:'Liberation Sans',sans-serif;font-size:7.4px;color:#1d6c40;font-weight:normal;white-space:nowrap;line-height:normal;-webkit-text-stroke:0.2px #1d6c40;;left:12.80px;transform:scaleX(1.0143);transform-origin:0 0;">Home</span><span style="position:absolute;top:16.00px;font-family:'Liberation Sans',sans-serif;font-size:7.4px;color:#f2f7f4;font-weight:normal;white-space:nowrap;line-height:normal;-webkit-text-stroke:0.1px currentColor;;left:47.80px;transform:scaleX(1.0658);transform-origin:0 0;">Insert</span><span style="position:absolute;top:16.00px;font-family:'Liberation Sans',sans-serif;font-size:7.4px;color:#f2f7f4;font-weight:normal;white-space:nowrap;line-height:normal;-webkit-text-stroke:0.1px currentColor;;left:82.90px;">Page Layout</span><span style="position:absolute;top:16.00px;font-family:'Liberation Sans',sans-serif;font-size:7.4px;color:#f2f7f4;font-weight:normal;white-space:nowrap;line-height:normal;-webkit-text-stroke:0.1px currentColor;;left:140.20px;">Formulas</span><span style="position:absolute;top:16.00px;font-family:'Liberation Sans',sans-serif;font-size:7.4px;color:#f2f7f4;font-weight:normal;white-space:nowrap;line-height:normal;-webkit-text-stroke:0.1px currentColor;;left:186.80px;">Data</span><span style="position:absolute;top:16.00px;font-family:'Liberation Sans',sans-serif;font-size:7.4px;color:#f2f7f4;font-weight:normal;white-space:nowrap;line-height:normal;-webkit-text-stroke:0.1px currentColor;;left:217.20px;">Review</span><span style="position:absolute;top:16.00px;font-family:'Liberation Sans',sans-serif;font-size:7.4px;color:#f2f7f4;font-weight:normal;white-space:nowrap;line-height:normal;-webkit-text-stroke:0.1px currentColor;;left:255.80px;transform:scaleX(1.0321);transform-origin:0 0;">View</span><span style="position:absolute;top:3.00px;font-family:'Liberation Sans',sans-serif;font-size:7.3px;color:#eef5f0;font-weight:normal;white-space:nowrap;line-height:normal;-webkit-text-stroke:0.1px currentColor;;left:350.80px;transform:scaleX(1.0098);transform-origin:0 0;">sampleBulkTransfer (1)</span><span style="position:absolute;top:3.00px;font-family:'Liberation Sans',sans-serif;font-size:6.6px;color:#7fa78f;font-weight:normal;white-space:nowrap;line-height:normal;-webkit-text-stroke:0.1px currentColor;;left:653.70px;transform:scaleX(1.0608);transform-origin:0 0;">Search Sheet</span><span style="position:absolute;top:17.00px;font-family:'Liberation Sans',sans-serif;font-size:7.4px;color:#eef5f0;font-weight:normal;white-space:nowrap;line-height:normal;-webkit-text-stroke:0.1px currentColor;;left:608.00px;transform:scaleX(1.0230);transform-origin:0 0;">Tell me what you want to do</span><span style="position:absolute;top:16.00px;font-family:'Liberation Sans',sans-serif;font-size:7.3px;color:#f2f7f4;font-weight:normal;white-space:nowrap;line-height:normal;-webkit-text-stroke:0.1px currentColor;;left:727.00px;transform:scaleX(0.9700);transform-origin:0 0;">Share</span><span style="position:absolute;top:71.00px;font-family:'Liberation Sans',sans-serif;font-size:6.6px;color:#222;font-weight:normal;white-space:nowrap;line-height:normal;-webkit-text-stroke:0.1px currentColor;;left:5.90px;transform:scaleX(1.0198);transform-origin:0 0;">F13</span><span style="position:absolute;top:85.00px;font-family:'Liberation Sans',sans-serif;font-size:6.4px;color:#333;font-weight:normal;white-space:nowrap;line-height:normal;-webkit-text-stroke:0.06px currentColor;;left:42.37px;">A</span><span style="position:absolute;top:85.00px;font-family:'Liberation Sans',sans-serif;font-size:6.4px;color:#333;font-weight:normal;white-space:nowrap;line-height:normal;-webkit-text-stroke:0.06px currentColor;;left:98.12px;">B</span><span style="position:absolute;top:85.00px;font-family:'Liberation Sans',sans-serif;font-size:6.4px;color:#333;font-weight:normal;white-space:nowrap;line-height:normal;-webkit-text-stroke:0.06px currentColor;;left:134.44px;">C</span><span style="position:absolute;top:85.00px;font-family:'Liberation Sans',sans-serif;font-size:6.4px;color:#333;font-weight:normal;white-space:nowrap;line-height:normal;-webkit-text-stroke:0.06px currentColor;;left:173.19px;">D</span><span style="position:absolute;top:85.00px;font-family:'Liberation Sans',sans-serif;font-size:6.4px;color:#333;font-weight:normal;white-space:nowrap;line-height:normal;-webkit-text-stroke:0.06px currentColor;;left:226.87px;">E</span><span style="position:absolute;top:85.00px;font-family:'Liberation Sans',sans-serif;font-size:6.4px;color:#1f7044;font-weight:normal;white-space:nowrap;line-height:normal;-webkit-text-stroke:0.06px currentColor;;left:282.05px;">F</span><span style="position:absolute;top:85.00px;font-family:'Liberation Sans',sans-serif;font-size:6.4px;color:#333;font-weight:normal;white-space:nowrap;line-height:normal;-webkit-text-stroke:0.06px currentColor;;left:329.51px;">G</span><span style="position:absolute;top:85.00px;font-family:'Liberation Sans',sans-serif;font-size:6.4px;color:#333;font-weight:normal;white-space:nowrap;line-height:normal;-webkit-text-stroke:0.06px currentColor;;left:390.19px;">H</span><span style="position:absolute;top:85.00px;font-family:'Liberation Sans',sans-serif;font-size:6.4px;color:#333;font-weight:normal;white-space:nowrap;line-height:normal;-webkit-text-stroke:0.06px currentColor;;left:454.36px;">I</span><span style="position:absolute;top:85.00px;font-family:'Liberation Sans',sans-serif;font-size:6.4px;color:#333;font-weight:normal;white-space:nowrap;line-height:normal;-webkit-text-stroke:0.06px currentColor;;left:498.15px;">J</span><span style="position:absolute;top:85.00px;font-family:'Liberation Sans',sans-serif;font-size:6.4px;color:#333;font-weight:normal;white-space:nowrap;line-height:normal;-webkit-text-stroke:0.06px currentColor;;left:532.37px;">K</span><span style="position:absolute;top:85.00px;font-family:'Liberation Sans',sans-serif;font-size:6.4px;color:#333;font-weight:normal;white-space:nowrap;line-height:normal;-webkit-text-stroke:0.06px currentColor;;left:563.72px;">L</span><span style="position:absolute;top:85.00px;font-family:'Liberation Sans',sans-serif;font-size:6.4px;color:#333;font-weight:normal;white-space:nowrap;line-height:normal;-webkit-text-stroke:0.06px currentColor;;left:598.84px;">M</span><span style="position:absolute;top:85.00px;font-family:'Liberation Sans',sans-serif;font-size:6.4px;color:#333;font-weight:normal;white-space:nowrap;line-height:normal;-webkit-text-stroke:0.06px currentColor;;left:635.19px;">N</span><span style="position:absolute;top:85.00px;font-family:'Liberation Sans',sans-serif;font-size:6.4px;color:#333;font-weight:normal;white-space:nowrap;line-height:normal;-webkit-text-stroke:0.06px currentColor;;left:671.01px;">O</span><span style="position:absolute;top:85.00px;font-family:'Liberation Sans',sans-serif;font-size:6.4px;color:#333;font-weight:normal;white-space:nowrap;line-height:normal;-webkit-text-stroke:0.06px currentColor;;left:707.37px;">P</span><span style="position:absolute;top:85.00px;font-family:'Liberation Sans',sans-serif;font-size:6.4px;color:#333;font-weight:normal;white-space:nowrap;line-height:normal;-webkit-text-stroke:0.06px currentColor;;left:743.01px;">Q</span><span style="position:absolute;top:96.00px;font-family:'Liberation Sans',sans-serif;font-size:6.6px;color:#222;font-weight:normal;white-space:nowrap;line-height:normal;-webkit-text-stroke:0.12px currentColor;;left:4.76px;">1</span><span style="position:absolute;top:105.00px;font-family:'Liberation Sans',sans-serif;font-size:6.6px;color:#222;font-weight:normal;white-space:nowrap;line-height:normal;-webkit-text-stroke:0.12px currentColor;;left:4.76px;">2</span><span style="position:absolute;top:114.00px;font-family:'Liberation Sans',sans-serif;font-size:6.6px;color:#222;font-weight:normal;white-space:nowrap;line-height:normal;-webkit-text-stroke:0.12px currentColor;;left:4.76px;">3</span><span style="position:absolute;top:122.00px;font-family:'Liberation Sans',sans-serif;font-size:6.6px;color:#222;font-weight:normal;white-space:nowrap;line-height:normal;-webkit-text-stroke:0.12px currentColor;;left:4.76px;">4</span><span style="position:absolute;top:131.00px;font-family:'Liberation Sans',sans-serif;font-size:6.6px;color:#222;font-weight:normal;white-space:nowrap;line-height:normal;-webkit-text-stroke:0.12px currentColor;;left:4.76px;">5</span><span style="position:absolute;top:140.00px;font-family:'Liberation Sans',sans-serif;font-size:6.6px;color:#222;font-weight:normal;white-space:nowrap;line-height:normal;-webkit-text-stroke:0.12px currentColor;;left:4.76px;">6</span><span style="position:absolute;top:149.00px;font-family:'Liberation Sans',sans-serif;font-size:6.6px;color:#222;font-weight:normal;white-space:nowrap;line-height:normal;-webkit-text-stroke:0.12px currentColor;;left:4.76px;">7</span><span style="position:absolute;top:158.00px;font-family:'Liberation Sans',sans-serif;font-size:6.6px;color:#222;font-weight:normal;white-space:nowrap;line-height:normal;-webkit-text-stroke:0.12px currentColor;;left:4.76px;">8</span><span style="position:absolute;top:167.00px;font-family:'Liberation Sans',sans-serif;font-size:6.6px;color:#222;font-weight:normal;white-space:nowrap;line-height:normal;-webkit-text-stroke:0.12px currentColor;;left:4.76px;">9</span><span style="position:absolute;top:176.00px;font-family:'Liberation Sans',sans-serif;font-size:6.6px;color:#222;font-weight:normal;white-space:nowrap;line-height:normal;-webkit-text-stroke:0.12px currentColor;;left:2.93px;">10</span><span style="position:absolute;top:184.00px;font-family:'Liberation Sans',sans-serif;font-size:6.6px;color:#222;font-weight:normal;white-space:nowrap;line-height:normal;-webkit-text-stroke:0.12px currentColor;;left:3.17px;">11</span><span style="position:absolute;top:193.00px;font-family:'Liberation Sans',sans-serif;font-size:6.6px;color:#222;font-weight:normal;white-space:nowrap;line-height:normal;-webkit-text-stroke:0.12px currentColor;;left:2.93px;">12</span><span style="position:absolute;top:202.00px;font-family:'Liberation Sans',sans-serif;font-size:6.6px;color:#217346;font-weight:normal;white-space:nowrap;line-height:normal;-webkit-text-stroke:0.12px currentColor;;left:2.93px;">13</span><span style="position:absolute;top:211.00px;font-family:'Liberation Sans',sans-serif;font-size:6.6px;color:#222;font-weight:normal;white-space:nowrap;line-height:normal;-webkit-text-stroke:0.12px currentColor;;left:2.93px;">14</span><span style="position:absolute;top:220.00px;font-family:'Liberation Sans',sans-serif;font-size:6.6px;color:#222;font-weight:normal;white-space:nowrap;line-height:normal;-webkit-text-stroke:0.12px currentColor;;left:2.93px;">15</span><span style="position:absolute;top:229.00px;font-family:'Liberation Sans',sans-serif;font-size:6.6px;color:#222;font-weight:normal;white-space:nowrap;line-height:normal;-webkit-text-stroke:0.12px currentColor;;left:2.93px;">16</span><span style="position:absolute;top:238.00px;font-family:'Liberation Sans',sans-serif;font-size:6.6px;color:#222;font-weight:normal;white-space:nowrap;line-height:normal;-webkit-text-stroke:0.12px currentColor;;left:2.93px;">17</span><span style="position:absolute;top:247.00px;font-family:'Liberation Sans',sans-serif;font-size:6.6px;color:#222;font-weight:normal;white-space:nowrap;line-height:normal;-webkit-text-stroke:0.12px currentColor;;left:2.93px;">18</span><span style="position:absolute;top:255.00px;font-family:'Liberation Sans',sans-serif;font-size:6.6px;color:#222;font-weight:normal;white-space:nowrap;line-height:normal;-webkit-text-stroke:0.12px currentColor;;left:2.93px;">19</span><span style="position:absolute;top:264.00px;font-family:'Liberation Sans',sans-serif;font-size:6.6px;color:#222;font-weight:normal;white-space:nowrap;line-height:normal;-webkit-text-stroke:0.12px currentColor;;left:2.93px;">20</span><span style="position:absolute;top:273.00px;font-family:'Liberation Sans',sans-serif;font-size:6.6px;color:#222;font-weight:normal;white-space:nowrap;line-height:normal;-webkit-text-stroke:0.12px currentColor;;left:2.93px;">21</span><span style="position:absolute;top:282.00px;font-family:'Liberation Sans',sans-serif;font-size:6.6px;color:#222;font-weight:normal;white-space:nowrap;line-height:normal;-webkit-text-stroke:0.12px currentColor;;left:2.93px;">22</span><span style="position:absolute;top:291.00px;font-family:'Liberation Sans',sans-serif;font-size:6.6px;color:#222;font-weight:normal;white-space:nowrap;line-height:normal;-webkit-text-stroke:0.12px currentColor;;left:2.93px;">23</span><span style="position:absolute;top:300.00px;font-family:'Liberation Sans',sans-serif;font-size:6.6px;color:#222;font-weight:normal;white-space:nowrap;line-height:normal;-webkit-text-stroke:0.12px currentColor;;left:2.93px;">24</span><span style="position:absolute;top:309.00px;font-family:'Liberation Sans',sans-serif;font-size:6.6px;color:#222;font-weight:normal;white-space:nowrap;line-height:normal;-webkit-text-stroke:0.12px currentColor;;left:2.93px;">25</span><span style="position:absolute;top:317.00px;font-family:'Liberation Sans',sans-serif;font-size:6.6px;color:#222;font-weight:normal;white-space:nowrap;line-height:normal;-webkit-text-stroke:0.12px currentColor;;left:2.93px;">26</span><span style="position:absolute;top:326.00px;font-family:'Liberation Sans',sans-serif;font-size:6.6px;color:#222;font-weight:normal;white-space:nowrap;line-height:normal;-webkit-text-stroke:0.12px currentColor;;left:2.93px;">27</span><span style="position:absolute;top:335.00px;font-family:'Liberation Sans',sans-serif;font-size:6.6px;color:#222;font-weight:normal;white-space:nowrap;line-height:normal;-webkit-text-stroke:0.12px currentColor;;left:2.93px;">28</span><span style="position:absolute;top:344.00px;font-family:'Liberation Sans',sans-serif;font-size:6.6px;color:#222;font-weight:normal;white-space:nowrap;line-height:normal;-webkit-text-stroke:0.12px currentColor;;left:2.93px;">29</span><span style="position:absolute;top:353.00px;font-family:'Liberation Sans',sans-serif;font-size:6.6px;color:#222;font-weight:normal;white-space:nowrap;line-height:normal;-webkit-text-stroke:0.12px currentColor;;left:2.93px;">30</span><span style="position:absolute;top:362.00px;font-family:'Liberation Sans',sans-serif;font-size:6.6px;color:#222;font-weight:normal;white-space:nowrap;line-height:normal;-webkit-text-stroke:0.12px currentColor;;left:2.93px;">31</span><span style="position:absolute;top:371.00px;font-family:'Liberation Sans',sans-serif;font-size:6.6px;color:#222;font-weight:normal;white-space:nowrap;line-height:normal;-webkit-text-stroke:0.12px currentColor;;left:2.93px;">32</span><span style="position:absolute;top:379.00px;font-family:'Liberation Sans',sans-serif;font-size:6.6px;color:#222;font-weight:normal;white-space:nowrap;line-height:normal;-webkit-text-stroke:0.12px currentColor;;left:2.93px;">33</span><span style="position:absolute;top:388.00px;font-family:'Liberation Sans',sans-serif;font-size:6.6px;color:#222;font-weight:normal;white-space:nowrap;line-height:normal;-webkit-text-stroke:0.12px currentColor;;left:2.93px;">34</span><span style="position:absolute;top:397.00px;font-family:'Liberation Sans',sans-serif;font-size:6.6px;color:#222;font-weight:normal;white-space:nowrap;line-height:normal;-webkit-text-stroke:0.12px currentColor;;left:2.93px;">35</span><span style="position:absolute;top:406.00px;font-family:'Liberation Sans',sans-serif;font-size:6.6px;color:#222;font-weight:normal;white-space:nowrap;line-height:normal;-webkit-text-stroke:0.12px currentColor;;left:2.93px;">36</span><span style="position:absolute;top:96.00px;font-family:'Liberation Sans',sans-serif;font-size:6.8px;color:#1e1e1e;font-weight:normal;white-space:nowrap;line-height:normal;-webkit-text-stroke:0.13px #1e1e1e;;left:14.00px;transform:scaleX(0.9023);transform-origin:0 0;">MerchantReferenceID</span><span style="position:absolute;top:96.00px;font-family:'Liberation Sans',sans-serif;font-size:6.8px;color:#1e1e1e;font-weight:normal;white-space:nowrap;line-height:normal;-webkit-text-stroke:0.13px #1e1e1e;;left:78.00px;transform:scaleX(0.8765);transform-origin:0 0;">BatchID</span><span style="position:absolute;top:96.00px;font-family:'Liberation Sans',sans-serif;font-size:6.8px;color:#1e1e1e;font-weight:normal;white-space:nowrap;line-height:normal;-webkit-text-stroke:0.13px #1e1e1e;;left:125.50px;transform:scaleX(0.9173);transform-origin:0 0;">Amount</span><span style="position:absolute;top:96.00px;font-family:'Liberation Sans',sans-serif;font-size:6.8px;color:#1e1e1e;font-weight:normal;white-space:nowrap;line-height:normal;-webkit-text-stroke:0.13px #1e1e1e;;left:151.00px;transform:scaleX(0.9000);transform-origin:0 0;">beneficiaryName</span><span style="position:absolute;top:96.00px;font-family:'Liberation Sans',sans-serif;font-size:6.8px;color:#1e1e1e;font-weight:normal;white-space:nowrap;line-height:normal;-webkit-text-stroke:0.13px #1e1e1e;;left:203.00px;transform:scaleX(0.9413);transform-origin:0 0;">beneficiaryMobile</span><span style="position:absolute;top:96.00px;font-family:'Liberation Sans',sans-serif;font-size:6.8px;color:#1e1e1e;font-weight:normal;white-space:nowrap;line-height:normal;-webkit-text-stroke:0.13px #1e1e1e;;left:258.00px;transform:scaleX(0.9123);transform-origin:0 0;">beneficiaryEmail</span><span style="position:absolute;top:96.00px;font-family:'Liberation Sans',sans-serif;font-size:6.8px;color:#1e1e1e;font-weight:normal;white-space:nowrap;line-height:normal;-webkit-text-stroke:0.13px #1e1e1e;;left:313.00px;transform:scaleX(0.8821);transform-origin:0 0;">paymentType</span><span style="position:absolute;top:96.00px;font-family:'Liberation Sans',sans-serif;font-size:6.8px;color:#1e1e1e;font-weight:normal;white-space:nowrap;line-height:normal;-webkit-text-stroke:0.13px #1e1e1e;;left:354.00px;transform:scaleX(0.9068);transform-origin:0 0;">beneficiaryAccountNumber</span><span style="position:absolute;top:96.00px;font-family:'Liberation Sans',sans-serif;font-size:6.8px;color:#1e1e1e;font-weight:normal;white-space:nowrap;line-height:normal;-webkit-text-stroke:0.13px #1e1e1e;;left:434.00px;transform:scaleX(0.8747);transform-origin:0 0;">beneficiaryIFSC</span><span style="position:absolute;top:96.00px;font-family:'Liberation Sans',sans-serif;font-size:6.8px;color:#1e1e1e;font-weight:normal;white-space:nowrap;line-height:normal;-webkit-text-stroke:0.13px #1e1e1e;;left:479.50px;transform:scaleX(0.8835);transform-origin:0 0;">Beneficiaryvpa</span><span style="position:absolute;top:96.00px;font-family:'Liberation Sans',sans-serif;font-size:6.8px;color:#1e1e1e;font-weight:normal;white-space:nowrap;line-height:normal;-webkit-text-stroke:0.13px #1e1e1e;;left:523.00px;transform:scaleX(0.8291);transform-origin:0 0;">Purpose</span><span style="position:absolute;top:105.00px;font-family:'Liberation Sans',sans-serif;font-size:6.5px;color:#1e1e1e;font-weight:normal;white-space:nowrap;line-height:normal;-webkit-text-stroke:0.13px #1e1e1e;;left:14.00px;transform:scaleX(0.9072);transform-origin:0 0;">34560</span><span style="position:absolute;top:105.00px;font-family:'Liberation Sans',sans-serif;font-size:6.8px;color:#1e1e1e;font-weight:normal;white-space:nowrap;line-height:normal;-webkit-text-stroke:0.13px #1e1e1e;;left:78.00px;transform:scaleX(0.9038);transform-origin:0 0;">Payout-Oct2019</span><span style="position:absolute;top:105.00px;font-family:'Liberation Sans',sans-serif;font-size:6.5px;color:#1e1e1e;font-weight:normal;white-space:nowrap;line-height:normal;-webkit-text-stroke:0.13px #1e1e1e;;left:125.50px;transform:scaleX(0.8294);transform-origin:0 0;">10</span><span style="position:absolute;top:105.00px;font-family:'Liberation Sans',sans-serif;font-size:6.5px;color:#1e1e1e;font-weight:normal;white-space:nowrap;line-height:normal;-webkit-text-stroke:0.13px #1e1e1e;;left:151.00px;transform:scaleX(0.7901);transform-origin:0 0;">XYZ</span><span style="position:absolute;top:105.00px;font-family:'Liberation Sans',sans-serif;font-size:6.5px;color:#1e1e1e;font-weight:normal;white-space:nowrap;line-height:normal;-webkit-text-stroke:0.13px #1e1e1e;;left:203.00px;transform:scaleX(0.9210);transform-origin:0 0;">9999999999</span><span style="position:absolute;top:105.00px;font-family:'Liberation Sans',sans-serif;font-size:6.8px;color:#1e1e1e;font-weight:normal;white-space:nowrap;line-height:normal;-webkit-text-stroke:0.13px #1e1e1e;;left:258.00px;transform:scaleX(0.9349);transform-origin:0 0;">email@email.com</span><span style="position:absolute;top:105.00px;font-family:'Liberation Sans',sans-serif;font-size:6.5px;color:#1e1e1e;font-weight:normal;white-space:nowrap;line-height:normal;-webkit-text-stroke:0.13px #1e1e1e;;left:313.00px;transform:scaleX(0.8613);transform-origin:0 0;">IMPS</span><span style="position:absolute;top:105.00px;font-family:'Liberation Sans',sans-serif;font-size:6.5px;color:#1e1e1e;font-weight:normal;white-space:nowrap;line-height:normal;-webkit-text-stroke:0.13px #1e1e1e;;left:354.00px;transform:scaleX(0.9210);transform-origin:0 0;">1234567890</span><span style="position:absolute;top:105.00px;font-family:'Liberation Sans',sans-serif;font-size:6.5px;color:#1e1e1e;font-weight:normal;white-space:nowrap;line-height:normal;-webkit-text-stroke:0.13px #1e1e1e;;left:434.00px;transform:scaleX(0.7850);transform-origin:0 0;">HDFCXXXXXX</span><span style="position:absolute;top:105.00px;font-family:'Liberation Sans',sans-serif;font-size:6.8px;color:#1e1e1e;font-weight:normal;white-space:nowrap;line-height:normal;-webkit-text-stroke:0.13px #1e1e1e;;left:523.00px;transform:scaleX(0.8313);transform-origin:0 0;">Payout</span><span style="position:absolute;top:114.00px;font-family:'Liberation Sans',sans-serif;font-size:6.5px;color:#1e1e1e;font-weight:normal;white-space:nowrap;line-height:normal;-webkit-text-stroke:0.13px #1e1e1e;;left:14.00px;transform:scaleX(0.9072);transform-origin:0 0;">34561</span><span style="position:absolute;top:114.00px;font-family:'Liberation Sans',sans-serif;font-size:6.8px;color:#1e1e1e;font-weight:normal;white-space:nowrap;line-height:normal;-webkit-text-stroke:0.13px #1e1e1e;;left:78.00px;transform:scaleX(0.9038);transform-origin:0 0;">Payout-Oct2020</span><span style="position:absolute;top:114.00px;font-family:'Liberation Sans',sans-serif;font-size:6.5px;color:#1e1e1e;font-weight:normal;white-space:nowrap;line-height:normal;-webkit-text-stroke:0.13px #1e1e1e;;left:125.50px;transform:scaleX(0.8889);transform-origin:0 0;">11</span><span style="position:absolute;top:114.00px;font-family:'Liberation Sans',sans-serif;font-size:6.5px;color:#1e1e1e;font-weight:normal;white-space:nowrap;line-height:normal;-webkit-text-stroke:0.13px #1e1e1e;;left:151.00px;transform:scaleX(0.7901);transform-origin:0 0;">XYZ</span><span style="position:absolute;top:114.00px;font-family:'Liberation Sans',sans-serif;font-size:6.5px;color:#1e1e1e;font-weight:normal;white-space:nowrap;line-height:normal;-webkit-text-stroke:0.13px #1e1e1e;;left:203.00px;transform:scaleX(0.9210);transform-origin:0 0;">9999999999</span><span style="position:absolute;top:114.00px;font-family:'Liberation Sans',sans-serif;font-size:6.8px;color:#1e1e1e;font-weight:normal;white-space:nowrap;line-height:normal;-webkit-text-stroke:0.13px #1e1e1e;;left:258.00px;transform:scaleX(0.9349);transform-origin:0 0;">email@email.com</span><span style="position:absolute;top:114.00px;font-family:'Liberation Sans',sans-serif;font-size:6.5px;color:#1e1e1e;font-weight:normal;white-space:nowrap;line-height:normal;-webkit-text-stroke:0.13px #1e1e1e;;left:313.00px;transform:scaleX(0.8066);transform-origin:0 0;">NEFT</span><span style="position:absolute;top:114.00px;font-family:'Liberation Sans',sans-serif;font-size:6.5px;color:#1e1e1e;font-weight:normal;white-space:nowrap;line-height:normal;-webkit-text-stroke:0.13px #1e1e1e;;left:354.00px;transform:scaleX(0.9210);transform-origin:0 0;">1234567891</span><span style="position:absolute;top:114.00px;font-family:'Liberation Sans',sans-serif;font-size:6.5px;color:#1e1e1e;font-weight:normal;white-space:nowrap;line-height:normal;-webkit-text-stroke:0.13px #1e1e1e;;left:434.00px;transform:scaleX(0.7850);transform-origin:0 0;">HDFCXXXXXX</span><span style="position:absolute;top:114.00px;font-family:'Liberation Sans',sans-serif;font-size:6.8px;color:#1e1e1e;font-weight:normal;white-space:nowrap;line-height:normal;-webkit-text-stroke:0.13px #1e1e1e;;left:523.00px;transform:scaleX(0.8313);transform-origin:0 0;">Payout</span><span style="position:absolute;top:122.00px;font-family:'Liberation Sans',sans-serif;font-size:6.5px;color:#1e1e1e;font-weight:normal;white-space:nowrap;line-height:normal;-webkit-text-stroke:0.13px #1e1e1e;;left:14.00px;transform:scaleX(0.9072);transform-origin:0 0;">34562</span><span style="position:absolute;top:122.00px;font-family:'Liberation Sans',sans-serif;font-size:6.8px;color:#1e1e1e;font-weight:normal;white-space:nowrap;line-height:normal;-webkit-text-stroke:0.13px #1e1e1e;;left:78.00px;transform:scaleX(0.9038);transform-origin:0 0;">Payout-Oct2021</span><span style="position:absolute;top:122.00px;font-family:'Liberation Sans',sans-serif;font-size:6.5px;color:#1e1e1e;font-weight:normal;white-space:nowrap;line-height:normal;-webkit-text-stroke:0.13px #1e1e1e;;left:125.50px;transform:scaleX(0.8294);transform-origin:0 0;">12</span><span style="position:absolute;top:122.00px;font-family:'Liberation Sans',sans-serif;font-size:6.5px;color:#1e1e1e;font-weight:normal;white-space:nowrap;line-height:normal;-webkit-text-stroke:0.13px #1e1e1e;;left:151.00px;transform:scaleX(0.7901);transform-origin:0 0;">XYZ</span><span style="position:absolute;top:122.00px;font-family:'Liberation Sans',sans-serif;font-size:6.5px;color:#1e1e1e;font-weight:normal;white-space:nowrap;line-height:normal;-webkit-text-stroke:0.13px #1e1e1e;;left:203.00px;transform:scaleX(0.9210);transform-origin:0 0;">9999999999</span><span style="position:absolute;top:122.00px;font-family:'Liberation Sans',sans-serif;font-size:6.8px;color:#1e1e1e;font-weight:normal;white-space:nowrap;line-height:normal;-webkit-text-stroke:0.13px #1e1e1e;;left:258.00px;transform:scaleX(0.9349);transform-origin:0 0;">email@email.com</span><span style="position:absolute;top:122.00px;font-family:'Liberation Sans',sans-serif;font-size:6.5px;color:#1e1e1e;font-weight:normal;white-space:nowrap;line-height:normal;-webkit-text-stroke:0.13px #1e1e1e;;left:313.00px;transform:scaleX(0.7352);transform-origin:0 0;">RTGS</span><span style="position:absolute;top:122.00px;font-family:'Liberation Sans',sans-serif;font-size:6.5px;color:#1e1e1e;font-weight:normal;white-space:nowrap;line-height:normal;-webkit-text-stroke:0.13px #1e1e1e;;left:354.00px;transform:scaleX(0.9210);transform-origin:0 0;">1234567892</span><span style="position:absolute;top:122.00px;font-family:'Liberation Sans',sans-serif;font-size:6.5px;color:#1e1e1e;font-weight:normal;white-space:nowrap;line-height:normal;-webkit-text-stroke:0.13px #1e1e1e;;left:434.00px;transform:scaleX(0.7850);transform-origin:0 0;">HDFCXXXXXX</span><span style="position:absolute;top:122.00px;font-family:'Liberation Sans',sans-serif;font-size:6.8px;color:#1e1e1e;font-weight:normal;white-space:nowrap;line-height:normal;-webkit-text-stroke:0.13px #1e1e1e;;left:523.00px;transform:scaleX(0.8313);transform-origin:0 0;">Payout</span><span style="position:absolute;top:131.00px;font-family:'Liberation Sans',sans-serif;font-size:6.5px;color:#1e1e1e;font-weight:normal;white-space:nowrap;line-height:normal;-webkit-text-stroke:0.13px #1e1e1e;;left:14.00px;transform:scaleX(0.9072);transform-origin:0 0;">34563</span><span style="position:absolute;top:131.00px;font-family:'Liberation Sans',sans-serif;font-size:6.8px;color:#1e1e1e;font-weight:normal;white-space:nowrap;line-height:normal;-webkit-text-stroke:0.13px #1e1e1e;;left:78.00px;transform:scaleX(0.9038);transform-origin:0 0;">Payout-Oct2022</span><span style="position:absolute;top:131.00px;font-family:'Liberation Sans',sans-serif;font-size:6.5px;color:#1e1e1e;font-weight:normal;white-space:nowrap;line-height:normal;-webkit-text-stroke:0.13px #1e1e1e;;left:125.50px;transform:scaleX(0.8294);transform-origin:0 0;">13</span><span style="position:absolute;top:131.00px;font-family:'Liberation Sans',sans-serif;font-size:6.5px;color:#1e1e1e;font-weight:normal;white-space:nowrap;line-height:normal;-webkit-text-stroke:0.13px #1e1e1e;;left:151.00px;transform:scaleX(0.7901);transform-origin:0 0;">XYZ</span><span style="position:absolute;top:131.00px;font-family:'Liberation Sans',sans-serif;font-size:6.5px;color:#1e1e1e;font-weight:normal;white-space:nowrap;line-height:normal;-webkit-text-stroke:0.13px #1e1e1e;;left:203.00px;transform:scaleX(0.9210);transform-origin:0 0;">9999999999</span><span style="position:absolute;top:131.00px;font-family:'Liberation Sans',sans-serif;font-size:6.8px;color:#1e1e1e;font-weight:normal;white-space:nowrap;line-height:normal;-webkit-text-stroke:0.13px #1e1e1e;;left:258.00px;transform:scaleX(0.9349);transform-origin:0 0;">email@email.com</span><span style="position:absolute;top:131.00px;font-family:'Liberation Sans',sans-serif;font-size:6.5px;color:#1e1e1e;font-weight:normal;white-space:nowrap;line-height:normal;-webkit-text-stroke:0.13px #1e1e1e;;left:313.00px;transform:scaleX(0.8300);transform-origin:0 0;">UPI</span><span style="position:absolute;top:131.00px;font-family:'Liberation Sans',sans-serif;font-size:6.8px;color:#1e1e1e;font-weight:normal;white-space:nowrap;line-height:normal;-webkit-text-stroke:0.13px #1e1e1e;;left:479.50px;transform:scaleX(0.8672);transform-origin:0 0;">abc@abc</span><span style="position:absolute;top:131.00px;font-family:'Liberation Sans',sans-serif;font-size:6.8px;color:#1e1e1e;font-weight:normal;white-space:nowrap;line-height:normal;-webkit-text-stroke:0.13px #1e1e1e;;left:523.00px;transform:scaleX(0.8313);transform-origin:0 0;">Payout</span><span style="position:absolute;top:417.00px;font-family:'Liberation Sans',sans-serif;font-size:6.9px;color:#2a7b4e;font-weight:bold;white-space:nowrap;line-height:normal;;left:45.30px;transform:scaleX(0.9488);transform-origin:0 0;">sampleBulkTransfer</span><span style="position:absolute;top:432.00px;font-family:'Liberation Sans',sans-serif;font-size:6.8px;color:#5a5a5a;font-weight:normal;white-space:nowrap;line-height:normal;-webkit-text-stroke:0.1px currentColor;;left:13.70px;transform:scaleX(0.9921);transform-origin:0 0;">Ready</span><span style="position:absolute;top:432.00px;font-family:'Liberation Sans',sans-serif;font-size:6.8px;color:#444;font-weight:normal;white-space:nowrap;line-height:normal;;left:736.70px;transform:scaleX(1.0120);transform-origin:0 0;">100%</span><span style="position:absolute;top:51.00px;font-family:'Liberation Sans',sans-serif;font-size:6.6px;color:#333;font-weight:normal;white-space:nowrap;line-height:normal;-webkit-text-stroke:0.1px currentColor;;left:10.80px;transform:scaleX(0.9007);transform-origin:0 0;">Paste</span><span style="position:absolute;top:30.00px;font-family:'Liberation Sans',sans-serif;font-size:6.6px;color:#262626;font-weight:normal;white-space:nowrap;line-height:normal;-webkit-text-stroke:0.1px currentColor;;left:49.00px;transform:scaleX(0.9059);transform-origin:0 0;">Cut</span><span style="position:absolute;top:43.00px;font-family:'Liberation Sans',sans-serif;font-size:6.6px;color:#262626;font-weight:normal;white-space:nowrap;line-height:normal;-webkit-text-stroke:0.1px currentColor;;left:49.00px;transform:scaleX(0.8957);transform-origin:0 0;">Copy</span><span style="position:absolute;top:55.00px;font-family:'Liberation Sans',sans-serif;font-size:6.6px;color:#262626;font-weight:normal;white-space:nowrap;line-height:normal;-webkit-text-stroke:0.1px currentColor;;left:49.00px;transform:scaleX(0.9191);transform-origin:0 0;">Format</span><span style="position:absolute;top:35.00px;font-family:'Liberation Sans',sans-serif;font-size:7.1px;color:#222;font-weight:normal;white-space:nowrap;line-height:normal;-webkit-text-stroke:0.1px currentColor;;left:84.00px;transform:scaleX(0.9798);transform-origin:0 0;">Calibri (Body)</span><span style="position:absolute;top:35.00px;font-family:'Liberation Sans',sans-serif;font-size:7.1px;color:#222;font-weight:normal;white-space:nowrap;line-height:normal;-webkit-text-stroke:0.1px currentColor;;left:144.70px;transform:scaleX(0.8364);transform-origin:0 0;">12</span><span style="position:absolute;top:34.00px;font-family:'Liberation Sans',sans-serif;font-size:8.2px;color:#444;font-weight:normal;white-space:nowrap;line-height:normal;-webkit-text-stroke:0.1px currentColor;;left:176.30px;transform:scaleX(1.0606);transform-origin:0 0;">A</span><span style="position:absolute;top:34.00px;font-family:'Liberation Sans',sans-serif;font-size:7.2px;color:#444;font-weight:normal;white-space:nowrap;line-height:normal;-webkit-text-stroke:0.1px currentColor;;left:192.30px;transform:scaleX(1.0423);transform-origin:0 0;">A</span><span style="position:absolute;top:51.00px;font-family:'Liberation Sans',sans-serif;font-size:8.0px;color:#444;font-weight:bold;white-space:nowrap;line-height:normal;-webkit-text-stroke:0.1px currentColor;;left:86.50px;transform:scaleX(0.9686);transform-origin:0 0;">B</span><span style="position:absolute;top:51.00px;font-family:'Liberation Serif',sans-serif;font-size:8.2px;color:#444;font-weight:normal;white-space:nowrap;line-height:normal;font-style:italic;-webkit-text-stroke:0.1px #444;;left:102.80px;transform:scaleX(1.6823);transform-origin:0 0;">I</span><span style="position:absolute;top:51.00px;font-family:'Liberation Sans',sans-serif;font-size:7.0px;color:#444;font-weight:normal;white-space:nowrap;line-height:normal;-webkit-text-stroke:0.1px currentColor;;left:118.80px;transform:scaleX(1.0272);transform-origin:0 0;">U</span><span style="position:absolute;top:50.00px;font-family:'Liberation Sans',sans-serif;font-size:7.4px;color:#333;font-weight:normal;white-space:nowrap;line-height:normal;-webkit-text-stroke:0.1px currentColor;;left:188.30px;transform:scaleX(1.3165);transform-origin:0 0;">A</span><span style="position:absolute;top:35.00px;font-family:'Liberation Sans',sans-serif;font-size:6.6px;color:#333;font-weight:normal;white-space:nowrap;line-height:normal;-webkit-text-stroke:0.1px currentColor;;left:324.80px;transform:scaleX(0.9439);transform-origin:0 0;">Wrap Text</span><span style="position:absolute;top:52.00px;font-family:'Liberation Sans',sans-serif;font-size:6.6px;color:#333;font-weight:normal;white-space:nowrap;line-height:normal;-webkit-text-stroke:0.1px currentColor;;left:324.80px;transform:scaleX(0.9281);transform-origin:0 0;">Merge &amp; Center</span><span style="position:absolute;top:34.00px;font-family:'Liberation Sans',sans-serif;font-size:7.2px;color:#222;font-weight:normal;white-space:nowrap;line-height:normal;-webkit-text-stroke:0.1px currentColor;;left:389.30px;transform:scaleX(0.9706);transform-origin:0 0;">Text</span><span style="position:absolute;top:50.00px;font-family:'Liberation Sans',sans-serif;font-size:9.2px;color:#3c3c3c;font-weight:normal;white-space:nowrap;line-height:normal;;left:411.30px;transform:scaleX(0.9300);transform-origin:0 0;">%</span><span style="position:absolute;top:51.00px;font-family:'Liberation Sans',sans-serif;font-size:6.5px;color:#333;font-weight:normal;white-space:nowrap;line-height:normal;-webkit-text-stroke:0.1px currentColor;;left:484.85px;transform:scaleX(0.9622);transform-origin:0 0;">Conditional</span><span style="position:absolute;top:57.00px;font-family:'Liberation Sans',sans-serif;font-size:6.5px;color:#333;font-weight:normal;white-space:nowrap;line-height:normal;-webkit-text-stroke:0.1px currentColor;;left:485.35px;transform:scaleX(0.9750);transform-origin:0 0;">Formatting</span><span style="position:absolute;top:51.00px;font-family:'Liberation Sans',sans-serif;font-size:6.5px;color:#333;font-weight:normal;white-space:nowrap;line-height:normal;-webkit-text-stroke:0.1px currentColor;;left:522.00px;transform:scaleX(0.9517);transform-origin:0 0;">Format</span><span style="position:absolute;top:57.00px;font-family:'Liberation Sans',sans-serif;font-size:6.5px;color:#333;font-weight:normal;white-space:nowrap;line-height:normal;-webkit-text-stroke:0.1px currentColor;;left:520.40px;transform:scaleX(0.9463);transform-origin:0 0;">as Table</span><span style="position:absolute;top:51.00px;font-family:'Liberation Sans',sans-serif;font-size:6.5px;color:#333;font-weight:normal;white-space:nowrap;line-height:normal;-webkit-text-stroke:0.1px currentColor;;left:555.00px;transform:scaleX(0.9819);transform-origin:0 0;">Cell</span><span style="position:absolute;top:57.00px;font-family:'Liberation Sans',sans-serif;font-size:6.5px;color:#333;font-weight:normal;white-space:nowrap;line-height:normal;-webkit-text-stroke:0.1px currentColor;;left:551.75px;transform:scaleX(0.9772);transform-origin:0 0;">Styles</span><span style="position:absolute;top:51.00px;font-family:'Liberation Sans',sans-serif;font-size:6.5px;color:#333;font-weight:normal;white-space:nowrap;line-height:normal;-webkit-text-stroke:0.1px currentColor;;left:588.00px;transform:scaleX(0.9837);transform-origin:0 0;">Insert</span><span style="position:absolute;top:51.00px;font-family:'Liberation Sans',sans-serif;font-size:6.5px;color:#333;font-weight:normal;white-space:nowrap;line-height:normal;-webkit-text-stroke:0.1px currentColor;;left:615.80px;transform:scaleX(0.9470);transform-origin:0 0;">Delete</span><span style="position:absolute;top:51.00px;font-family:'Liberation Sans',sans-serif;font-size:6.5px;color:#333;font-weight:normal;white-space:nowrap;line-height:normal;-webkit-text-stroke:0.1px currentColor;;left:643.80px;transform:scaleX(0.9323);transform-origin:0 0;">Format</span><span style="position:absolute;top:30.00px;font-family:'Liberation Sans',sans-serif;font-size:6.4px;color:#333;font-weight:normal;white-space:nowrap;line-height:normal;-webkit-text-stroke:0.1px currentColor;;left:691.70px;transform:scaleX(0.9393);transform-origin:0 0;">AutoSum</span><span style="position:absolute;top:43.00px;font-family:'Liberation Sans',sans-serif;font-size:6.4px;color:#333;font-weight:normal;white-space:nowrap;line-height:normal;-webkit-text-stroke:0.1px currentColor;;left:691.70px;transform:scaleX(0.9300);transform-origin:0 0;">Fill</span><span style="position:absolute;top:56.00px;font-family:'Liberation Sans',sans-serif;font-size:6.4px;color:#333;font-weight:normal;white-space:nowrap;line-height:normal;-webkit-text-stroke:0.1px currentColor;;left:691.70px;transform:scaleX(0.9227);transform-origin:0 0;">Clear</span><span style="position:absolute;top:32.00px;font-family:'Liberation Sans',sans-serif;font-size:8px;color:#3a86d8;font-weight:normal;white-space:nowrap;line-height:normal;-webkit-text-stroke:0.1px currentColor;;left:729.80px;transform:scaleX(1.1228);transform-origin:0 0;">A</span><span style="position:absolute;top:39.00px;font-family:'Liberation Sans',sans-serif;font-size:8.6px;color:#6a6a6a;font-weight:normal;white-space:nowrap;line-height:normal;-webkit-text-stroke:0.1px currentColor;;left:730.20px;transform:scaleX(1.0667);transform-origin:0 0;">Z</span><span style="position:absolute;top:51.00px;font-family:'Liberation Sans',sans-serif;font-size:6.5px;color:#333;font-weight:normal;white-space:nowrap;line-height:normal;-webkit-text-stroke:0.1px currentColor;;left:730.95px;transform:scaleX(0.9799);transform-origin:0 0;">Sort &amp;</span><span style="position:absolute;top:57.00px;font-family:'Liberation Sans',sans-serif;font-size:6.5px;color:#333;font-weight:normal;white-space:nowrap;line-height:normal;-webkit-text-stroke:0.1px currentColor;;left:732.80px;transform:scaleX(0.9133);transform-origin:0 0;">Filter</span><span style="position:absolute;top:70.00px;font-family:'Liberation Serif',sans-serif;font-size:7.8px;color:#555;font-weight:normal;white-space:nowrap;line-height:normal;font-style:italic;left:89.00px;transform:scaleX(1.2410);transform-origin:0 0;">fx</span>
</body></html>
